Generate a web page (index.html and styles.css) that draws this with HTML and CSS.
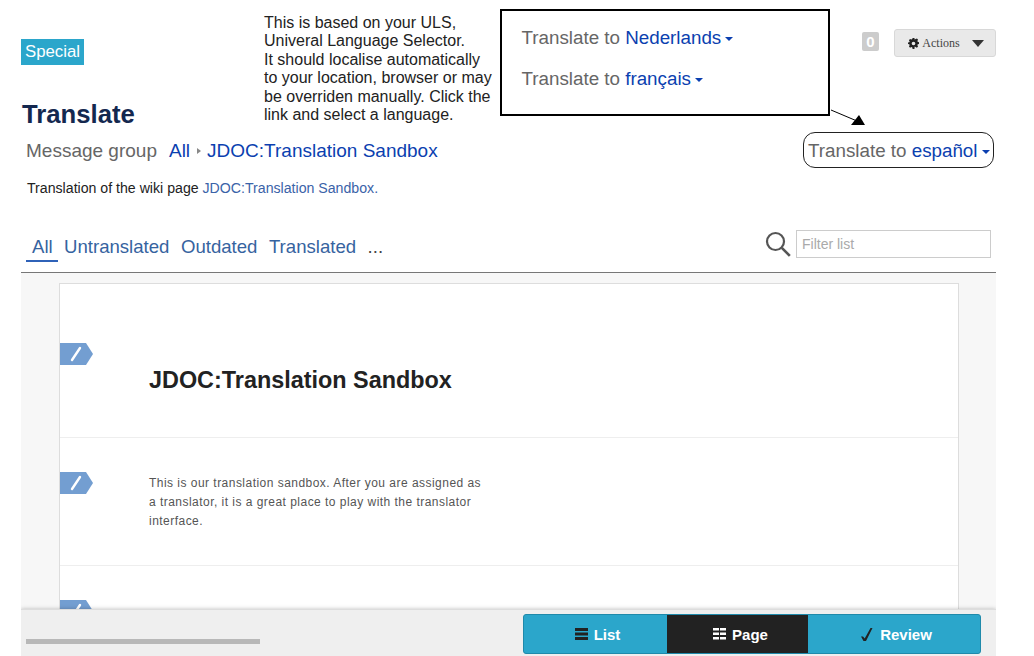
FILE: index.html
```html
<!DOCTYPE html>
<html lang="en">
<head>
<meta charset="utf-8">
<title>Translate</title>
<link rel="stylesheet" href="styles.css">
</head>
<body>
<div class="page">
  <header class="top">
    <span class="special">Special</span>
    <div class="top-actions">
      <span class="count">0</span>
      <button class="actions">
        <svg class="gear" viewBox="0 0 12 12" width="11" height="11"><path fill="#222" fill-rule="evenodd" d="M5 0h2l.3 1.6 1-.5 1.5-.6 1.2 1.4-.8 1.3.4 1 1.4.3v2l-1.4.3-.4 1 .8 1.3-1.2 1.4-1.5-.6-1-.5L7 12H5l-.3-1.6-1-.5-1.5.6L1 9.100l.8-1.300-.4-1L0 6.500v-1.500l1.400-.3.4-1L1 2.400l1.200-1.400 1.500.6 1-.5zM6 4a2 2 0 1 0 0 4 2 2 0 0 0 0-4z"/></svg>
        <span>Actions</span>
        <span class="caret-big"></span>
      </button>
    </div>
  </header>
  <h1 class="title">Translate</h1>
  <div class="group-row">
    <div class="group">
      <span class="muted">Message group</span>
      <a class="link all">All</a>
      <span class="crumb"></span>
      <a class="link">JDOC:Translation Sandbox</a>
    </div>
    <div class="lang-callout">Translate to <a class="link">español</a><span class="caret"></span></div>
  </div>
  <p class="desc">Translation of the wiki page <a class="wiki">JDOC:Translation Sandbox.</a></p>
  <div class="tabs-row">
    <nav class="tabs">
      <a class="tab active">All</a>
      <a class="tab">Untranslated</a>
      <a class="tab">Outdated</a>
      <a class="tab">Translated</a>
      <span class="more">...</span>
    </nav>
    <div class="filter">
      <svg viewBox="0 0 26 26" width="26" height="26"><circle cx="10.500" cy="10.500" r="8.500" fill="none" stroke="#555" stroke-width="2.200"/><path d="M16.800 16.800l8 8" stroke="#555" stroke-width="2.600" fill="none"/></svg>
      <input class="filter-input" type="text" placeholder="Filter list">
    </div>
  </div>
  <main class="workspace">
    <div class="card">
      <section class="unit unit-title">
        <span class="tag"><svg viewBox="0 0 33 22" width="33" height="22"><path fill="#739ed1" d="M0 0h26l7 11-7 11H0z"/><path d="M12 17l8-12" stroke="#fff" stroke-width="2.400" stroke-linecap="round"/></svg></span>
        <h2>JDOC:Translation Sandbox</h2>
      </section>
      <section class="unit unit-text">
        <span class="tag"><svg viewBox="0 0 33 22" width="33" height="22"><path fill="#739ed1" d="M0 0h26l7 11-7 11H0z"/><path d="M12 17l8-12" stroke="#fff" stroke-width="2.400" stroke-linecap="round"/></svg></span>
        <p>This is our translation sandbox. After you are assigned as a translator, it is a great place to play with the translator interface.</p>
      </section>
      <section class="unit unit-last">
        <span class="tag"><svg viewBox="0 0 33 22" width="33" height="22"><path fill="#739ed1" d="M0 0h26l7 11-7 11H0z"/><path d="M12 17l8-12" stroke="#fff" stroke-width="2.400" stroke-linecap="round"/></svg></span>
      </section>
    </div>
  </main>
  <footer class="bar">
    <div class="progress"></div>
    <div class="modes">
      <a class="mode mode-list">
        <svg viewBox="0 0 13 12" width="13" height="12"><path fill="#222" d="M0 0h13v3H0zM0 4.500h13v3H0zM0 9h13v3H0z"/></svg>List
      </a>
      <a class="mode mode-page">
        <svg viewBox="0 0 13 12" width="13" height="12"><path fill="#fff" d="M0 0h6v2.500H0zM7 0h6v2.500H7zM0 4.500h6V7H0zM7 4.500h6V7H7zM0 9h6v2.500H0zM7 9h6v2.500H7z"/></svg>Page
      </a>
      <a class="mode mode-review">
        <svg viewBox="0 0 12 13" width="12" height="13"><path fill="#222" d="M9.500 0H11.500L5 13H2.500L0 8.500H2L3.700 10.500z"/></svg>Review
      </a>
    </div>
  </footer>
</div>
<aside class="note">This is based on your ULS, Univeral Language Selector.<br>It should localise automatically to your location, browser or may be overriden manually. Click the link and select a language.</aside>
<aside class="lang-box">
  <div>Translate to <a class="link">Nederlands</a><span class="caret"></span></div>
  <div>Translate to <a class="link">français</a><span class="caret"></span></div>
</aside>
<svg class="arrow" viewBox="0 0 40 20" width="40" height="20"><path d="M1 2l26 11" stroke="#000" stroke-width="1" fill="none"/><path d="M21 17h14l-6-10z" fill="#000"/></svg>
</body>
</html>
```
FILE: styles.css
```css
html, body { margin: 0; padding: 0; height: 656px; overflow: hidden; background: #fff; }
body { font-family: "Liberation Sans", Arial, sans-serif; color: #222; position: relative; }
.page { width: 975px; margin-left: 21px; height: 656px; position: relative; overflow: hidden; }

.top { display: flex; justify-content: space-between; align-items: flex-start; height: 97px; }
.special { margin-top: 39px; background: #2ba6cb; color: #fff; font-size: 16.800px; line-height: 26px; padding: 0 4px; width: 55px; white-space: nowrap; }
.top-actions { display: flex; align-items: flex-start; margin-top: 29px; }
.count { margin-top: 3px; width: 17px; height: 19px; background: #ccc; color: #fff; font-weight: bold; font-size: 15px; line-height: 19px; text-align: center; border-radius: 2px; margin-right: 15px; }
.actions { width: 102px; height: 28px; display: flex; align-items: center; justify-content: center; gap: 3px; background: #e9e9e9; border: 1px solid #d8d8d8; border-radius: 3px; font-family: "Liberation Serif", serif; font-size: 12px; color: #444; padding: 0 0 0 2px; }
.caret-big { border: 6px solid transparent; border-top: 7px solid #333; border-bottom: 0; margin-left: 9px; }

.title { margin: 0 0 0 1px; font-size: 25.700px; line-height: 34px; height: 35px; font-weight: bold; color: #14284f; }

.group-row { display: flex; justify-content: space-between; align-items: flex-start; height: 46px; }
.group { font-size: 19px; line-height: 22px; padding: 8px 0 0 5px; display: flex; align-items: center; }
.muted { color: #666; }
.link { color: #0b3fb0; }
.all { margin-left: 12px; }
.crumb { border: 3.500px solid transparent; border-left: 4px solid #888; border-right: 0; margin: 0 6px 0 7px; }
.lang-callout { margin-right: 2px; width: 191px; height: 36px; box-sizing: border-box; border: 1px solid #222; border-radius: 12px; font-size: 18.800px; line-height: 35px; color: #666; padding-left: 4px; white-space: nowrap; }
.caret { display: inline-block; border: 4.500px solid transparent; border-top: 4.500px solid #0b3fb0; border-bottom: 0; margin-left: 4px; vertical-align: middle; }

.desc { margin: 0 0 0 6px; font-size: 14.150px; line-height: 20px; height: 50px; color: #222; }
.wiki { color: #3a63a8; }

.tabs-row { display: flex; justify-content: space-between; align-items: flex-start; height: 44px; border-bottom: 1px solid #777; }
.tabs { display: flex; padding: 0 0 0 5px; font-size: 18.600px; line-height: 22px; margin-top: 8px; }
.tab { color: #36639f; margin-right: 11.500px; height: 24px; }
.tab.active { margin-right: 6px; padding: 0 6px; width: 20px; border-bottom: 2px solid #2f62b8; }
.more { color: #444; }
.filter { display: flex; align-items: center; gap: 5px; margin-right: 5px; margin-top: 2px; }
.filter-input { width: 195px; height: 28px; box-sizing: border-box; border: 1px solid #ccc; padding: 0 5px; font-family: "Liberation Sans", sans-serif; font-size: 14px; outline: 0; }
.filter-input::placeholder { color: #aaa; opacity: 1; }

.workspace { background: #f7f7f7; padding: 10px 37px 0 38px; height: 340px; }
.card { background: #fff; border: 1px solid #ddd; height: 400px; }
.unit { position: relative; border-bottom: 1px solid #eee; box-sizing: border-box; }
.unit-title { height: 154px; }
.unit-text { height: 128px; }
.unit-last { border-bottom: 0; }
.tag { position: absolute; left: 0; line-height: 0; }
.unit-title .tag { top: 59px; }
.unit-text .tag { top: 34px; }
.unit-last .tag { top: 34px; }
.unit h2 { margin: 0; padding: 83px 0 0 89px; font-size: 23.400px; line-height: 26px; color: #222; }
.unit p { margin: 0; padding: 36px 0 0 89px; width: 340px; font-size: 12px; line-height: 19px; color: #555; letter-spacing: .470px; }

.bar { position: absolute; left: 0; right: 0; bottom: 0; height: 47px; background: #efefef; border-top: 1px solid #ddd; box-shadow: 0 0 4px rgba(0,0,0,.25); box-sizing: border-box; display: flex; justify-content: flex-end; }
.progress { position: absolute; left: 5px; bottom: 12px; width: 234px; height: 5px; background: #b8b8b8; }
.modes { display: flex; margin: 4px 15px 2px 0; width: 458px; height: 40px; box-sizing: border-box; border-radius: 3px; background: #2ba6cb; border: 1px solid #1f8aab; overflow: hidden; }
.mode { display: flex; align-items: center; justify-content: center; gap: 6px; font-size: 15px; font-weight: bold; color: #fff; box-sizing: border-box; }
.mode-list { width: 143px; padding-left: 4px; }
.mode-page { width: 141px; background: #222; padding-left: 6px; }
.mode-review { flex: 1; gap: 7px; padding-left: 5px; }

.note { position: absolute; left: 264px; top: 14px; width: 232px; font-size: 16px; line-height: 18.400px; color: #222; }
.lang-box { position: absolute; left: 500px; top: 9px; width: 330px; height: 107px; box-sizing: border-box; border: 2px solid #000; background: #fff; padding: 16px 0 0 19.500px; font-size: 18.800px; line-height: 22px; color: #666; }
.lang-box div { margin-bottom: 19px; }
.arrow { position: absolute; left: 830px; top: 108px; }
```
